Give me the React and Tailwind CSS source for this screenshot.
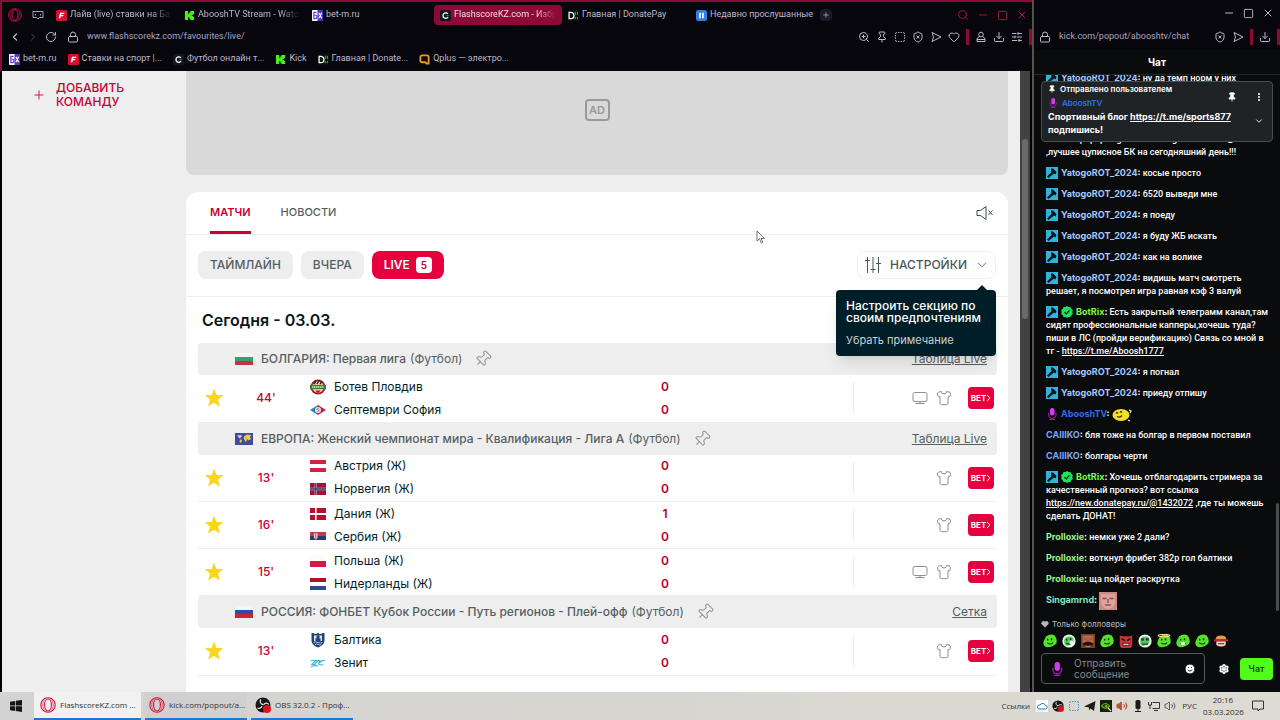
import {
  ChevronDown,
  ChevronLeft,
  ChevronRight,
  Download,
  EllipsisVertical,
  Heart,
  Lock,
  Minus,
  Pin,
  Plus,
  RotateCw,
  Search,
  Settings,
  Shirt,
  ShieldX,
  SlidersHorizontal,
  Smile,
  Square,
  SquareDashed,
  Volume2,
  X,
  ZoomIn,
} from "lucide-react";

const TABS = [
  { icon: "fonbet", title: "Лайв (live) ставки на Баск", long: true },
  { icon: "kick", title: "AbooshTV Stream - Watch", long: true },
  { icon: "bet", title: "bet-m.ru" },
  { icon: "flash", title: "FlashscoreKZ.com - Избр", active: true, long: true },
  { icon: "donate", title: "Главная | DonatePay" },
  { icon: "pause", title: "Недавно прослушанные" },
];

const BOOKMARKS = [
  { icon: "bet", title: "bet-m.ru" },
  { icon: "fonbet", title: "Ставки на спорт |..." },
  { icon: "flash", title: "Футбол онлайн т..." },
  { icon: "kick", title: "Kick" },
  { icon: "donate", title: "Главная | Donate..." },
  { icon: "qplus", title: "Qplus — электро..." },
];

const LEAGUES = [
  {
    flag: "bg",
    name: "БОЛГАРИЯ: Первая лига",
    link: "Таблица Live",
    matches: [
      { time: "44", home: ["botev", "Ботев Пловдив"], away: ["septemvri", "Септември София"], score: [0, 0], tv: true },
    ],
  },
  {
    flag: "world",
    name: "ЕВРОПА: Женский чемпионат мира - Квалификация - Лига A",
    link: "Таблица Live",
    matches: [
      { time: "13", home: ["at", "Австрия (Ж)"], away: ["no", "Норвегия (Ж)"], score: [0, 0] },
      { time: "16", home: ["dk", "Дания (Ж)"], away: ["rs", "Сербия (Ж)"], score: [1, 0] },
      { time: "15", home: ["pl", "Польша (Ж)"], away: ["nl", "Нидерланды (Ж)"], score: [0, 0], tv: true },
    ],
  },
  {
    flag: "ru",
    name: "РОССИЯ: ФОНБЕТ Кубок России - Путь регионов - Плей-офф",
    link: "Сетка",
    matches: [
      { time: "13", home: ["baltika", "Балтика"], away: ["zenit", "Зенит"], score: [0, 0] },
    ],
  },
];

const USERS = {
  yatogo: { name: "YatogoROT_2024", color: "text-[#a5c8ff]", badges: ["mod"] },
  botrix: { name: "BotRix", color: "text-[#75fd46]", badges: ["mod", "verified"] },
  aboosh: { name: "AbooshTV", color: "text-[#2f6fe4]", badges: ["mic"] },
  caiiiko: { name: "CAIIIKO", color: "text-[#7ea6f0]", badges: [] },
  prolloxie: { name: "Prolloxie", color: "text-[#9df58c]", badges: [] },
  singamrnd: { name: "Singamrnd", color: "text-[#7de8c4]", badges: [] },
};

const MESSAGES = [
  { user: "yatogo", text: "косые просто" },
  { user: "yatogo", text: "6520 выведи мне" },
  { user: "yatogo", text: "я поеду" },
  { user: "yatogo", text: "я буду ЖБ искать" },
  { user: "yatogo", text: "как на волике" },
  { user: "yatogo", text: "видишь матч смотреть решает, я посмотрел игра равная кэф 3 валуй" },
  {
    user: "botrix",
    text: "Есть закрытый телеграмм канал,там сидят профессиональные капперы,хочешь туда? пиши в ЛС (пройди верификацию) Связь со мной в тг - ",
    link: "https://t.me/Aboosh1777",
  },
  { user: "yatogo", text: "я погнал" },
  { user: "yatogo", text: "приеду отпишу" },
  { user: "aboosh", emote: "lemon" },
  { user: "caiiiko", text: "бля тоже на болгар в первом поставил" },
  { user: "caiiiko", text: "болгары черти" },
  {
    user: "botrix",
    text: "Хочешь отблагодарить стримера за качественный прогноз? вот ссылка ",
    link: "https://new.donatepay.ru/@1432072",
    after: " ,где ты можешь сделать ДОНАТ!",
  },
  { user: "prolloxie", text: "немки уже 2 дали?" },
  { user: "prolloxie", text: "воткнул фрибет 382р гол балтики" },
  { user: "prolloxie", text: "ща пойдет раскрутка" },
  { user: "singamrnd", emote: "face" },
];

const QUICK_EMOTES = ["peek", "clown", "laugh", "happy", "angry", "skull", "angel", "grin", "hug", "burger"];

function Favicon({ name }) {
  return (
    <svg viewBox="0 0 12 12" className="size-[11px] shrink-0" aria-hidden="true">
      {name === "fonbet" && (
        <>
          <rect width="12" height="12" rx="1.5" fill="#d2122e" />
          <path d="M4.4 3h4.800l-.4 1.400H6l-.3 1.100h2.500l-.4 1.400H5.300L4.700 9H3z" fill="#fff" />
        </>
      )}
      {name === "kick" && (
        <path d="M1 1h3.500v3h1.300V2.500h1.200V1H11v3.500H9.800v1H8.500v1h1.300v1H11V11H7V9.500H5.800V8H4.500v3H1z" fill="#45f01e" />
      )}
      {name === "bet" && (
        <>
          <rect width="12" height="12" rx="1" fill="#fff" />
          <path d="M6 0h6v12H6z" fill="#4c35c9" />
          <path d="M5 2.500H2v7h1.500a1.800 1.800 0 0 0 0-3.800H2" stroke="#5a3bd6" strokeWidth="1.3" fill="none" />
          <path d="M7.500 3l3 6M10.500 3l-3 6" stroke="#fff" strokeWidth="1.3" />
          <path d="M6 6h2.500" stroke="#e8405f" strokeWidth="1.2" />
        </>
      )}
      {name === "flash" && (
        <>
          <rect width="12" height="12" rx="2" fill="#0c1a20" />
          <path d="M8.600 4.200A3 3 0 1 0 8.800 7.600" stroke="#fff" strokeWidth="1.4" fill="none" />
          <path d="M7 6h2.500" stroke="#e4254f" strokeWidth="1.2" />
        </>
      )}
      {name === "donate" && (
        <>
          <rect width="12" height="12" fill="#0a130d" />
          <path d="M1.200 2.500H3a3 3 0 0 1 0 7H1.200z" stroke="#fff" strokeWidth="1.4" fill="none" />
          <path d="M8 2v3.500M10.300 2v3.500M8 7.500V10M10.300 7.500V10" stroke="#36a344" strokeWidth="1.2" />
        </>
      )}
      {name === "pause" && (
        <>
          <rect width="12" height="12" rx="2.5" fill="#2f80ed" />
          <path d="M4.400 3v6M7.600 3v6" stroke="#fff" strokeWidth="1.8" />
        </>
      )}
      {name === "qplus" && (
        <path d="M3.500 1.500h5a2 2 0 0 1 2 2v7H8.300L7 9H3.500a2 2 0 0 1-2-2V3.500a2 2 0 0 1 2-2z" stroke="#f39a1e" strokeWidth="2" fill="none" />
      )}
    </svg>
  );
}

function OperaIcon({ className }) {
  return (
    <svg viewBox="0 0 16 16" fill="none" stroke="#d3123f" className={className} aria-hidden="true">
      <circle cx="8" cy="8" r="7.2" strokeWidth="1.1" />
      <ellipse cx="8" cy="8" rx="3.4" ry="6" strokeWidth="1.1" />
      <path d="M5 2.500c-3 2.500-3 8.500 0 11M11 2.500c3 2.500 3 8.500 0 11" strokeWidth=".6" />
    </svg>
  );
}

function FlowIcon() {
  return (
    <svg viewBox="0 0 12 12" className="size-3" fill="none" stroke="currentColor" strokeLinejoin="round" aria-hidden="true">
      <path d="M2 1.500L11 6l-9 4.500L3.500 6z" />
    </svg>
  );
}

function ProfileIcon() {
  return (
    <svg viewBox="0 0 12 12" className="size-3" fill="none" stroke="currentColor" aria-hidden="true">
      <circle cx="6" cy="3.500" r="2.300" />
      <path d="M4.500 5.500L2 7.500v3h8v-3L7.500 5.500M2 8.500h8" />
    </svg>
  );
}

function MicIcon({ className }) {
  return (
    <svg viewBox="0 0 12 12" className={className} aria-hidden="true">
      <rect x="4" y="0" width="4.500" height="7.500" rx="2.200" fill="#d43bf0" />
      <path d="M2.500 5v1.500a3.500 3.500 0 0 0 7.500 0V5M6.200 10v1.500M3.500 11.500h5.500" stroke="#8d1fa3" strokeWidth="1.2" fill="none" />
    </svg>
  );
}

function Flag({ code, className }) {
  return (
    <svg viewBox="0 0 18 12" preserveAspectRatio="none" className={className} aria-hidden="true">
      {code === "bg" && (
        <>
          <path d="M0 0h18v4H0z" fill="#f4f4f4" />
          <path d="M0 4h18v4H0z" fill="#3f9b6c" />
          <path d="M0 8h18v4H0z" fill="#c33345" />
        </>
      )}
      {code === "world" && (
        <>
          <path d="M0 0h18v12H0z" fill="#3f4aa0" />
          <path d="M2 2.500l4-.5 1 1.500-2 1.500.5 1.500z" fill="#c9cfe0" />
          <path d="M5 6.500l2 .5-1 3-1.500-1zM8.500 5l1-2 2.500-1.500 4 .5-1 2.500 1 1.500-2.500 1.500L12 6l-1 3.500L9.500 7z" fill="#e9c84a" />
        </>
      )}
      {code === "ru" && (
        <>
          <path d="M0 0h18v4H0z" fill="#f4f4f4" />
          <path d="M0 4h18v4H0z" fill="#2b4fa8" />
          <path d="M0 8h18v4H0z" fill="#cf2436" />
        </>
      )}
      {code === "at" && (
        <>
          <path d="M0 0h18v12H0z" fill="#cf2440" />
          <path d="M0 4h18v4H0z" fill="#fff" />
        </>
      )}
      {code === "no" && (
        <>
          <path d="M0 0h18v12H0z" fill="#a80f35" />
          <path d="M6.500 0v12M0 6h18" stroke="#d9c3cf" strokeWidth="2.6" />
          <path d="M6.500 0v12M0 6h18" stroke="#2c3a6b" strokeWidth="1.4" />
        </>
      )}
      {code === "dk" && (
        <>
          <path d="M0 0h18v12H0z" fill="#b80f2f" />
          <path d="M6.500 0v12M0 6h18" stroke="#fff" strokeWidth="1.8" />
        </>
      )}
      {code === "rs" && (
        <>
          <path d="M0 1h18v4H0z" fill="#c43a4a" />
          <path d="M0 5h18v4H0z" fill="#283a6e" />
          <path d="M0 9h18v3H0z" fill="#fff" />
          <path d="M4.500 2.500h4V7l-2 1.800-2-1.800z" fill="#f1d9dc" />
          <path d="M6.500 3v5" stroke="#c43a4a" />
        </>
      )}
      {code === "pl" && (
        <>
          <path d="M0 0h18v6H0z" fill="#fbfbfb" />
          <path d="M0 6h18v6H0z" fill="#d41a43" />
        </>
      )}
      {code === "nl" && (
        <>
          <path d="M0 0h18v4H0z" fill="#a8152e" />
          <path d="M0 4h18v4H0z" fill="#fff" />
          <path d="M0 8h18v4H0z" fill="#2c4a92" />
        </>
      )}
    </svg>
  );
}

function TeamLogo({ code }) {
  if (code === "botev") {
    return (
      <svg viewBox="0 0 16 16" className="size-4" aria-hidden="true">
        <circle cx="8" cy="8" r="7.5" fill="#9c1c23" />
        <circle cx="8" cy="8" r="5.8" fill="#f1e4c0" />
        <path d="M4 5l2-3M7 5l2.500-4M10 5l2-2.500" stroke="#222" strokeWidth="1.4" />
        <path d="M0 5.800h16v4.400H0z" fill="#3f7a35" />
        <path d="M2 8h12" stroke="#f3ecd2" strokeWidth="1.5" strokeDasharray="1.3 .6" />
        <path d="M5 11.500l3 2.500 3-2.500z" fill="#9c1c23" />
      </svg>
    );
  }
  if (code === "septemvri") {
    return (
      <svg viewBox="0 0 16 16" className="size-4" aria-hidden="true">
        <path d="M8 3v10L0 8z" fill="#2a7fb5" />
        <path d="M8 3v10l8-5z" fill="#c3203c" />
        <circle cx="8" cy="8" r="3" fill="#dfe8f2" />
        <path d="M6.500 7.500l2-1M7.500 9.500l2-1.500" stroke="#c3203c" />
      </svg>
    );
  }
  if (code === "baltika") {
    return (
      <svg viewBox="0 0 16 16" className="size-4" aria-hidden="true">
        <path d="M1.500 1h2l1 1h2L8 .5 9.500 2h2l1-1h2v7c0 4-3 6-6.500 7.500C4.500 14 1.500 12 1.500 8z" fill="#1f4274" />
        <path d="M4 3.500h8V9H4z" fill="#dfe9f5" />
        <path d="M5.500 9V6l1 .5V4L8 3l1.500 1v2.500l1-.5v3z" fill="#1f4274" />
        <path d="M3.500 10.500q2-1.200 4.500 0t4.500 0M5 12.500q1.500-1 3 0t3 0" stroke="#a9c5e8" fill="none" />
      </svg>
    );
  }
  if (code === "zenit") {
    return (
      <svg viewBox="0 0 16 16" className="size-4" fill="none" stroke="#4bb0dd" aria-hidden="true">
        <path d="M1 5.500h5l-4 4h3l1-2 2-2h2l-1.500 3 4-3H15M8.500 9.500l5 .5M1 12l3-1.500 4 .3" strokeWidth="1.2" />
      </svg>
    );
  }
  return <Flag code={code} className="h-3 w-4" />;
}

function TvIcon() {
  return (
    <svg viewBox="0 0 16 14" className="h-[14px] w-4" fill="none" stroke="#8a9092" aria-hidden="true">
      <rect x="1" y="1.500" width="14" height="9" rx="2" />
      <path d="M8 10.500v2M3.500 12.500h9" />
    </svg>
  );
}

function StarButton() {
  return (
    <button type="button" aria-label="Убрать из избранного" className="block">
      <svg viewBox="0 0 20 20" className="size-5" aria-hidden="true">
        <path d="M10 .5l2.400 6.400 7 .3-5.400 4.300 1.900 7L10 14.700l-5.900 3.800 1.900-7L.6 7.200l7-.3z" fill="#f8d61c" />
      </svg>
    </button>
  );
}

function BrowserChrome() {
  return (
    <header className="flex h-[71px] shrink-0 flex-col border-t-2 border-l-2 border-[#8d0a36] bg-[#07060c] pt-px font-['Roboto','Noto_Sans',sans-serif] text-[9px] text-[#bdb9d0]">
      <div className="flex h-6 items-center">
        <div className="flex w-12 items-center gap-2.5 pl-1.5">
          <OperaIcon className="size-[14px]" />
          <svg viewBox="0 0 12 10" className="h-2.5 w-3" fill="none" stroke="#a9a5bd" aria-hidden="true">
            <path d="M1 1.500h10v6H7.500L6 9 4.500 7.500H1zM3.500 4v1.500M8.500 4v1.500" />
          </svg>
        </div>
        {TABS.map((tab) => (
          <button
            key={tab.title}
            type="button"
            className={`flex h-5 w-32 items-center gap-[3px] rounded-sm px-1.5 whitespace-nowrap ${tab.active ? "bg-[#8d0a36] text-[#f0dfe8]" : ""}`}
          >
            <Favicon name={tab.icon} />
            <span
              className={
                tab.long ? "grow overflow-hidden text-left [mask-image:linear-gradient(to_right,black_80%,transparent)]" : ""
              }
            >
              {tab.title}
            </span>
          </button>
        ))}
        <button type="button" aria-label="Новая вкладка" className="ml-0.5 rounded-sm bg-[#1c1a26] p-0.5">
          <Plus className="size-2" />
        </button>
        <div className="ml-auto flex items-center gap-2 pr-1 text-[#c0113f]">
          <Search className="size-3" strokeWidth={1.8} />
          <Minus className="size-3" strokeWidth={1.8} />
          <Square className="size-[11px]" strokeWidth={2} />
          <X className="size-3" strokeWidth={2} />
        </div>
      </div>

      <div className="flex h-5 items-center gap-1.5 pl-[7px]">
        <ChevronLeft className="size-3" strokeWidth={2.5} />
        <ChevronRight className="size-3 text-[#4a4756]" />
        <RotateCw className="size-3" />
        <Lock className="ml-1 size-3" />
        <input
          type="text"
          aria-label="Адрес"
          defaultValue="www.flashscorekz.com/favourites/live/"
          className="min-w-0 grow bg-transparent pl-0.5 text-[9px] text-[#aaa5c4] outline-none"
        />
        <ZoomIn className="size-3" />
        <Pin className="size-3" />
        <SquareDashed className="size-3" />
        <ShieldX className="size-3" />
        <FlowIcon />
        <Heart className="size-3" />
        <span className="h-4 w-[3px] bg-[#8d0a36]" />
        <ProfileIcon />
        <Download className="size-3" />
        <SlidersHorizontal className="size-3" />
        <span className="h-4 w-[3px] bg-[#8d0a36]" />
      </div>

      <nav className="flex h-6 items-center gap-[11px] pl-[7px]">
        {BOOKMARKS.map((item) => (
          <a key={item.title} href="#" className="flex items-center gap-[3px] whitespace-nowrap">
            <Favicon name={item.icon} />
            {item.title}
          </a>
        ))}
      </nav>
    </header>
  );
}

function SettingsMenu() {
  return (
    <div className="relative ml-auto">
      <button
        type="button"
        className="flex h-7 items-center gap-2 rounded-lg border border-[#f1f1f1] px-1.5 text-[12px] font-medium text-[#4b5558]"
      >
        <svg viewBox="0 0 18 18" className="size-[18px]" fill="none" stroke="#4b5558" aria-hidden="true">
          <path d="M3.500 1v16M9 1v16M14.500 1v16M1 4.500h5M6.500 13.500h5M12 7.500h5" />
        </svg>
        НАСТРОЙКИ
        <ChevronDown className="size-[14px]" strokeWidth={1.5} />
      </button>
      <div
        role="tooltip"
        className="absolute top-[39px] right-0 z-10 w-40 rounded bg-[#001e28] p-2.5 text-[12px] leading-3 font-medium text-white shadow-lg"
      >
        <svg viewBox="0 0 12 6" className="absolute -top-[5px] right-2 h-1.5 w-3" aria-hidden="true">
          <path d="M0 6l6-6 6 6z" fill="#001e28" />
        </svg>
        Настроить секцию по своим предпочтениям
        <button type="button" className="mt-2.5 block text-[11px] leading-3 font-normal text-[#c8d0d3]">
          Убрать примечание
        </button>
      </div>
    </div>
  );
}

function MatchRow({ match }) {
  return (
    <tr className="h-[47px] border-b border-[#eeeeee]">
      <td className="pl-1.5">
        <StarButton />
      </td>
      <td className="text-center text-[12px] font-medium text-[#c80037]">{match.time}'</td>
      <td className="pl-2">
        {[match.home, match.away].map(([logo, name]) => (
          <div key={name} className="flex h-[23px] items-center gap-2 text-[12px] text-[#001e28]">
            <span className="flex w-4 justify-center">
              <TeamLogo code={logo} />
            </span>
            {name}
          </div>
        ))}
      </td>
      <td className="text-[12px] font-semibold text-[#b8002f]">
        {match.score.map((goals, index) => (
          <div key={index} className="flex h-[23px] w-10 items-center justify-center">
            {goals}
          </div>
        ))}
      </td>
      <td>
        <div className="flex h-8 items-center justify-end gap-2 border-l border-[#eeeeee] pr-[3px] text-[#8a9092]">
          {match.tv && <TvIcon />}
          <Shirt className="size-4" strokeWidth={1.5} />
          <button
            type="button"
            className="ml-2 flex h-[22px] w-[26px] items-center justify-center rounded bg-[#e6003e] text-[8px] font-bold text-white"
          >
            BET
            <svg viewBox="0 0 5 8" className="h-2 w-[5px]" fill="none" stroke="currentColor" aria-hidden="true">
              <path d="M1 1l3 3-3 3" />
            </svg>
          </button>
        </div>
      </td>
    </tr>
  );
}

function League({ league }) {
  return (
    <section>
      <div className="flex h-8 items-center rounded bg-[#eeeeee] pr-2.5 pl-[37px] text-[12px] text-[#555e61]">
        <Flag code={league.flag} className="h-3 w-[18px]" />
        <h3 className="ml-2 font-medium">{league.name}</h3>
        <span className="ml-1">(Футбол)</span>
        <button type="button" aria-label="Закрепить" className="ml-3 text-[#8f9698]">
          <Pin className="size-[18px] rotate-45" strokeWidth={1.4} />
        </button>
        <a href="#" className="ml-auto underline">
          {league.link}
        </a>
      </div>
      <table className="w-full table-fixed">
        <colgroup>
          <col className="w-8" />
          <col className="w-[72px]" />
          <col />
          <col className="w-52" />
          <col className="w-36" />
        </colgroup>
        <tbody>
          {league.matches.map((match) => (
            <MatchRow key={match.home[1]} match={match} />
          ))}
        </tbody>
      </table>
    </section>
  );
}

function ScorePage() {
  return (
    <div className="flex min-h-0 grow border-l-2 border-black bg-[#eeeeee]">
      <aside className="w-46 shrink-0 pt-2.5 pl-[30px]">
        <button type="button" className="flex items-center gap-2.5 text-left text-[12px] leading-[14px] font-medium text-[#c80037]">
          <Plus className="size-3.5" strokeWidth={1.5} />
          <span className="w-20">ДОБАВИТЬ КОМАНДУ</span>
        </button>
      </aside>

      <main className="flex min-w-0 grow flex-col">
        <div className="flex h-[104px] shrink-0 justify-center rounded-b-lg bg-[#d9d9d9] pt-7">
          <span className="flex h-[22px] w-[25px] items-center justify-center rounded-sm border-2 border-[#999999] text-[11px] font-semibold text-[#999999]">
            AD
          </span>
        </div>

        <div className="mt-[17px] min-h-0 grow overflow-hidden rounded-t-xl bg-white">
          <div className="flex h-[43px] items-center border-b border-[#eeeeee] pr-[14px] pl-6 text-[11px] font-medium">
            <div className="flex h-full gap-[30px]">
              <button type="button" className="border-b-[3px] border-[#c80037] pt-0.5 font-semibold text-[#c80037]">
                МАТЧИ
              </button>
              <button type="button" className="border-b-[3px] border-transparent pt-0.5 text-[#555e61]">
                НОВОСТИ
              </button>
            </div>
            <button type="button" aria-label="Звук выключен" className="ml-auto">
              <svg viewBox="0 0 18 16" className="h-4 w-[18px]" fill="none" stroke="#33454b" aria-hidden="true">
                <path d="M1 5.500h3.500L10 1.500v13L4.500 10.500H1zM12.500 5.500l4 4.500M16.500 5.500l-4 4.500" />
              </svg>
            </button>
          </div>

          <div className="flex h-[62px] items-start gap-2 border-b border-[#eeeeee] px-3 pt-4 text-[12px] font-medium text-[#555e61]">
            <button type="button" className="h-7 rounded-lg bg-[#eeeeee] px-3">
              ТАЙМЛАЙН
            </button>
            <button type="button" className="h-7 rounded-lg bg-[#eeeeee] px-3">
              ВЧЕРА
            </button>
            <button type="button" className="flex h-7 items-center gap-1.5 rounded-lg bg-[#e6003e] px-3 font-semibold text-white">
              LIVE
              <span className="flex size-4 items-center justify-center rounded bg-white text-[10px] text-[#c80037]">5</span>
            </button>
            <SettingsMenu />
          </div>

          <h2 className="flex h-[46px] items-center pl-4 text-[16px] font-semibold text-[#0b1519]">Сегодня - 03.03.</h2>

          <div className="pr-[11px] pl-3">
            {LEAGUES.map((league) => (
              <League key={league.name} league={league} />
            ))}
          </div>
        </div>
      </main>

      <div className="ml-3 w-3 shrink-0 border-r-2 border-black bg-[#424242] px-0.5 pt-[68px]">
        <div className="h-[180px] rounded-full bg-[#6a6a6a]" />
      </div>
    </div>
  );
}

function Badge({ name }) {
  if (name === "mod") {
    return (
      <svg viewBox="0 0 12 12" className="mr-[3px] inline-block size-3 align-[-3px]" aria-hidden="true">
        <path d="M0 0h12v12H0z" fill="#2fb4dc" />
        <path d="M5 1.500h2l3.500 3.500-1 2.500-1.500-1-5.500 4.500L1 9.500 5.500 5z" fill="#05141b" />
      </svg>
    );
  }
  if (name === "verified") {
    return (
      <svg viewBox="0 0 12 12" className="mr-[3px] inline-block size-3 align-[-3px]" aria-hidden="true">
        <path d="M6 0l1.600 1.100 1.900-.1.700 1.800L11.800 4l-.4 2 .4 2-1.600 1.200-.7 1.800-1.900-.1L6 12l-1.600-1.100-1.900.1-.7-1.800L.2 8l.4-2-.4-2 1.600-1.200L2.500 1l1.900.1z" fill="#1fe05a" />
        <path d="M3.500 6.200l1.800 1.700 3.200-3.500" stroke="#06210e" strokeWidth="1.3" fill="none" />
      </svg>
    );
  }
  return <MicIcon className="mr-[3px] inline-block size-3 align-[-3px]" />;
}

function Emote({ name, className }) {
  if (name === "lemon") {
    return (
      <svg viewBox="0 0 20 14" className={className} aria-hidden="true">
        <ellipse cx="9" cy="7" rx="8.5" ry="6" fill="#f2e12c" />
        <path d="M4 5.500q1-1.500 2 0M8 4.500q1-1.500 2 0M5 8.500q3 1.500 5-1" stroke="#3b3407" strokeWidth="1.3" fill="none" />
        <path d="M17 2l2 1-1 2M16 12l2 1" stroke="#eaf5d0" strokeWidth="1.2" fill="none" />
      </svg>
    );
  }
  if (name === "face" || name === "laugh") {
    return (
      <svg viewBox="0 0 18 18" className={className} aria-hidden="true">
        <path d="M0 0h18v18H0z" fill={name === "face" ? "#c98a86" : "#7c3f2b"} />
        <path d="M2 2h14v9q-2 6-7 6t-7-6z" fill={name === "face" ? "#dba39d" : "#b06a48"} />
        <path d="M3.500 6.500h4M10.500 6.500h4M9 7v4" stroke="#8a4a4a" strokeWidth="1.3" fill="none" />
        <path
          d={name === "face" ? "M6 13h6" : "M3.500 12q5.500-3 11 0v2h-11z"}
          stroke={name === "face" ? "#8a4a4a" : "#24100a"}
          strokeWidth="1.3"
          fill="#241008"
        />
      </svg>
    );
  }
  if (name === "angry") {
    return (
      <svg viewBox="0 0 18 18" className={className} aria-hidden="true">
        <path d="M1 2l4 1h8l4-1v13l-2 3H3l-2-3z" fill="#c7343a" />
        <path d="M3.500 6l4 2.500M14.500 6l-4 2.500" stroke="#26060a" strokeWidth="2" />
        <path d="M5 14.500V12h8v2.500z" fill="#fff" stroke="#26060a" />
      </svg>
    );
  }
  if (name === "burger") {
    return (
      <svg viewBox="0 0 18 18" className={className} aria-hidden="true">
        <path d="M2 7q0-5 7-5t7 5z" fill="#e0a04a" />
        <path d="M0 7h18v2.500H0z" fill="#c02a2a" />
        <path d="M3 9.500h12V14q-6 4-12 0z" fill="#f2dfc4" />
        <path d="M5 12.500h8" stroke="#8b1e1e" strokeWidth="1.5" />
      </svg>
    );
  }
  const pale = name === "clown" || name === "skull";
  return (
    <svg viewBox="0 0 18 18" className={className} aria-hidden="true">
      {pale && <circle cx="9" cy="9" r="8.5" fill="#eef5ee" />}
      <path
        d={pale ? "M4 5q5-3 9-1 3 4 1 8-4 4-9 3-4-4-1-10z" : "M4 3q6-4 11-1 4 5 2 10-4 5-12 5-6-2-4-8z"}
        fill={pale ? "#4dc85a" : "#56e22c"}
      />
      <path d="M6 6v2.500M11 5.500V8" stroke="#0c2a08" strokeWidth="1.8" />
      <path d={name === "skull" ? "M5 13h8" : "M5.500 11.500q4 3 7.500-.5"} stroke="#0c2a08" strokeWidth="1.3" fill="none" />
      {name === "clown" && <circle cx="12" cy="11" r="2.5" fill="#fff" />}
      {name === "skull" && <path d="M4 7h3.500M10.500 7H14" stroke="#4d2a58" strokeWidth="3" />}
      {name === "angel" && <ellipse cx="9" cy="2" rx="7.5" ry="1.500" fill="none" stroke="#f5e58a" strokeWidth="1.3" />}
      {name === "grin" && <path d="M5.500 10.500h7q-1 4-3.500 4t-3.500-4z" fill="#fff" />}
    </svg>
  );
}

function UserName({ user }) {
  return (
    <span className="font-['Inter','Noto_Sans',sans-serif] leading-none font-bold">
      <span className={user.color}>{user.name}</span>:{" "}
    </span>
  );
}

function Message({ message }) {
  const user = USERS[message.user];

  return (
    <li className="py-1">
      {user.badges.map((badge) => (
        <Badge key={badge} name={badge} />
      ))}
      <UserName user={user} />
      {message.text}
      {message.link && (
        <a href="#" className="underline">
          {message.link}
        </a>
      )}
      {message.after}
      {message.emote && (
        <Emote
          name={message.emote}
          className={
            message.emote === "face" ? "-my-1 inline-block size-[18px] align-middle" : "-my-1 inline-block h-[14px] w-5 align-middle"
          }
        />
      )}
    </li>
  );
}

function PinnedMessage() {
  return (
    <div className="absolute inset-x-[7px] top-1.5 h-[61px] rounded-sm border border-[#4a4d50] bg-[#202325] px-1.5 font-semibold">
      <p className="flex items-center gap-1 text-[8px] leading-[14px]">
        <Pin className="size-2 fill-white" />
        Отправлено пользователем
      </p>
      <p className="flex items-center gap-1 text-[8px] leading-[14px] text-[#2f6fe4]">
        <MicIcon className="size-2.5" />
        AbooshTV
      </p>
      <p className="w-52 text-[9px] leading-[13px] font-bold">
        Спортивный блог{" "}
        <a href="#" className="underline">
          https://t.me/sports877
        </a>
        <br />
        подпишись!
      </p>
      <div className="absolute top-2.5 right-2 grid grid-cols-2 gap-x-[17px] gap-y-3.5">
        <button type="button" aria-label="Открепить">
          <Pin className="size-2.5 fill-white" />
        </button>
        <button type="button" aria-label="Меню">
          <EllipsisVertical className="size-2.5" strokeWidth={3} />
        </button>
        <button type="button" aria-label="Свернуть" className="col-start-2">
          <ChevronDown className="size-2.5" />
        </button>
      </div>
    </div>
  );
}

function ChatWindow() {
  return (
    <aside className="flex w-[248px] shrink-0 flex-col overflow-hidden border-l-2 border-[#55534e] bg-[#0a0b0d] text-white">
      <header className="flex h-[50px] shrink-0 flex-col bg-[#07060c] text-[#bdb9d0]">
        <div className="flex h-[26px] items-center justify-end gap-2 pr-1.5">
          <Minus className="size-3" />
          <Square className="size-[11px]" />
          <X className="size-3" />
        </div>
        <div className="flex h-[22px] items-center gap-1.5 pl-[5px]">
          <Lock className="size-3" />
          <input
            type="text"
            aria-label="Адрес чата"
            defaultValue="kick.com/popout/abooshtv/chat"
            className="min-w-0 grow bg-transparent pl-0.5 font-['Roboto','Noto_Sans',sans-serif] text-[9px] text-[#aaa5c4] outline-none"
          />
          <ShieldX className="size-3" />
          <FlowIcon />
          <span className="h-4 w-[3px] bg-[#8d0a36]" />
          <Download className="size-3" />
          <span className="h-4 w-[3px] bg-[#8d0a36]" />
        </div>
      </header>
      <h1 className="flex h-[25px] shrink-0 items-center justify-center border-b border-[#24272a] text-[10px] font-bold">Чат</h1>

      <div className="relative flex min-h-0 grow">
        <ul className="flex min-w-0 grow flex-col justify-end overflow-hidden pr-1.5 pl-3 font-['Roboto','Noto_Sans',sans-serif] text-[9px] leading-[13px] font-medium">
          <li className="py-1">
            <Badge name="mod" />
            <UserName user={USERS.yatogo} />
            ну да темп норм у них
          </li>
          <li className="pt-11 pb-1">
            m.ru/ru/popup/registration?btag=161630699_467724 ,лучшее цуписное БК на сегодняшний день!!!
          </li>
          {MESSAGES.map((message, index) => (
            <Message key={index} message={message} />
          ))}
        </ul>
        <div className="flex w-1 shrink-0 flex-col justify-end">
          <div className="h-[108px] w-[3px] rounded-full bg-[#4a4d50]" />
        </div>
        <PinnedMessage />
      </div>

      <footer className="shrink-0 px-[7px] pt-1.5 pb-2">
        <p className="flex items-center gap-[3px] text-[8px] leading-[14px] text-[#b6babd]">
          <Heart className="size-2 fill-[#b6babd]" />
          Только фолловеры
        </p>
        <div className="mt-[3px] flex gap-[5px] pl-0.5">
          {QUICK_EMOTES.map((name) => (
            <button key={name} type="button" aria-label={name}>
              <Emote name={name} className="size-[14px]" />
            </button>
          ))}
        </div>
        <div className="mt-[5px] flex items-center">
          <div className="flex h-[31px] w-[164px] items-center gap-2.5 rounded-sm border border-[#55595c] px-2">
            <MicIcon className="size-[14px] shrink-0" />
            <textarea
              rows={2}
              aria-label="Сообщение"
              placeholder="Отправить сообщение"
              className="block h-[22px] w-0 grow resize-none overflow-hidden bg-transparent text-[10px] leading-[11px] placeholder:text-[#85898c] focus:outline-none"
            />
            <Smile className="size-3 shrink-0 fill-white stroke-[#0a0b0d]" />
          </div>
          <button type="button" aria-label="Настройки чата" className="ml-auto">
            <Settings className="size-2.5" strokeWidth={4} />
          </button>
          <button type="button" className="ml-[11px] h-[22px] w-[33px] rounded-sm bg-[#53fc18] text-[9px] font-medium text-[#0b2a04]">
            Чат
          </button>
        </div>
      </footer>
    </aside>
  );
}

function ObsIcon({ className }) {
  return (
    <svg viewBox="0 0 16 16" className={className} aria-hidden="true">
      <circle cx="8" cy="8" r="7.5" fill="#151515" />
      <path d="M8 7.500A3 3 0 0 1 6 2.500M8.500 8a3 3 0 0 1 5.300-.5M7 9a3 3 0 0 1-4.500 2" stroke="#ddd" strokeWidth="1.3" fill="none" />
      <circle cx="12" cy="12" r="4" fill="#e0101c" />
    </svg>
  );
}

function Taskbar() {
  return (
    <footer className="flex h-7 shrink-0 items-center bg-linear-to-r from-[#d3d3d3] via-[#d6d5cf] to-[#dddbd2] font-['Open_Sans','Noto_Sans',sans-serif] text-[8px] text-[#333333]">
      <button type="button" aria-label="Пуск" className="mr-3 ml-2.5">
        <svg viewBox="0 0 12 12" className="size-3" aria-hidden="true">
          <path d="M0 1.700l5.300-.8v4.700H0zM6 .8L12 0v5.600H6zM0 6.300h5.300V11L0 10.300zM6 6.300h6V12l-6-.9z" fill="#151515" />
        </svg>
      </button>
      <div className="flex h-full gap-1 whitespace-nowrap">
        <button type="button" className="flex w-[107px] items-center gap-1 border-b-2 border-[#2275c7] bg-[#f1f1f1] px-1.5">
          <OperaIcon className="size-4 shrink-0" />
          FlashscoreKZ.com ...
        </button>
        <button type="button" className="flex w-[102px] items-center gap-1 border-b-2 border-[#2275c7] bg-[#d2cfcf] px-1">
          <OperaIcon className="size-4 shrink-0" />
          kick.com/popout/a...
        </button>
        <button type="button" className="flex w-[102px] items-center gap-1 border-b-2 border-[#2275c7] px-1">
          <ObsIcon className="size-4 shrink-0" />
          OBS 32.0.2 - Проф...
        </button>
      </div>

      <div className="ml-auto flex items-center gap-1 pr-[15px]">
        <span className="mr-0.5">Ссылки</span>
        <svg viewBox="0 0 12 12" className="size-3" aria-hidden="true">
          <path d="M0 0h12v12H0z" fill="#f8fbff" />
          <path d="M3 9h6.500a1.700 1.700 0 0 0 0-3.500A3 3 0 0 0 4 5a2 2 0 0 0-1 4z" stroke="#2f78c9" fill="none" />
        </svg>
        <ObsIcon className="size-3" />
        <SquareDashed className="size-3 text-[#2f8fcb]" />
        <svg viewBox="0 0 12 12" className="size-3" aria-hidden="true">
          <path d="M0 6.500L11.500 1 10 11 6.500 8.500 5 10.500V7.500z" fill="#1b1b1b" />
        </svg>
        <svg viewBox="0 0 12 12" className="size-3" aria-hidden="true">
          <path d="M0 0h12v12H0z" fill="#10210a" />
          <path d="M1.500 6q4-5 8 0-4 4.500-8 0z" stroke="#76b900" strokeWidth="1.2" fill="none" />
          <circle cx="6" cy="6" r="1.3" fill="#76b900" />
          <path d="M8 8l3 3" stroke="#fff" strokeWidth="1.3" />
        </svg>
        <Volume2 className="size-3 fill-[#c0553b] text-[#c0553b]" />
        <svg viewBox="0 0 12 12" className="size-3" aria-hidden="true">
          <rect x="3.500" y="0" width="5" height="9" rx="1.500" fill="#1b1b1b" />
          <path d="M6 9v2.500M3 11.500h6" stroke="#1b1b1b" />
        </svg>
        <svg viewBox="0 0 12 12" className="size-3" fill="none" stroke="#333" aria-hidden="true">
          <path d="M4.500 2.500h7v6h-7M6 10.500h4M.5 2v3h3V2M2 5v4" />
        </svg>
        <Volume2 className="size-3" strokeWidth={1.5} />
        <span className="mx-0.5">РУС</span>
        <time className="w-10 text-center leading-3 whitespace-nowrap">
          20:16
          <br />
          03.03.2026
        </time>
        <svg viewBox="0 0 14 14" className="ml-1 size-3.5" fill="none" stroke="#333" aria-label="Уведомления">
          <path d="M1.500 2h11v8H9l-2 2v-2H1.500z" />
        </svg>
      </div>
    </footer>
  );
}

export default function App() {
  return (
    <div className="relative flex h-screen flex-col overflow-hidden bg-black font-['Inter','Noto_Sans',sans-serif]">
      <div className="flex min-h-0 grow">
        <div className="flex min-w-0 grow flex-col overflow-hidden">
          <BrowserChrome />
          <ScorePage />
        </div>
        <ChatWindow />
      </div>
      <Taskbar />

      <svg viewBox="0 0 10 14" className="absolute top-[230px] left-[756px] h-3.5 w-2.5" aria-hidden="true">
        <path d="M1 1v10l2.500-2.200L5.300 13l1.500-.7L5 8.500h3.500z" fill="#fff" stroke="#555" strokeWidth=".8" />
      </svg>
    </div>
  );
}
